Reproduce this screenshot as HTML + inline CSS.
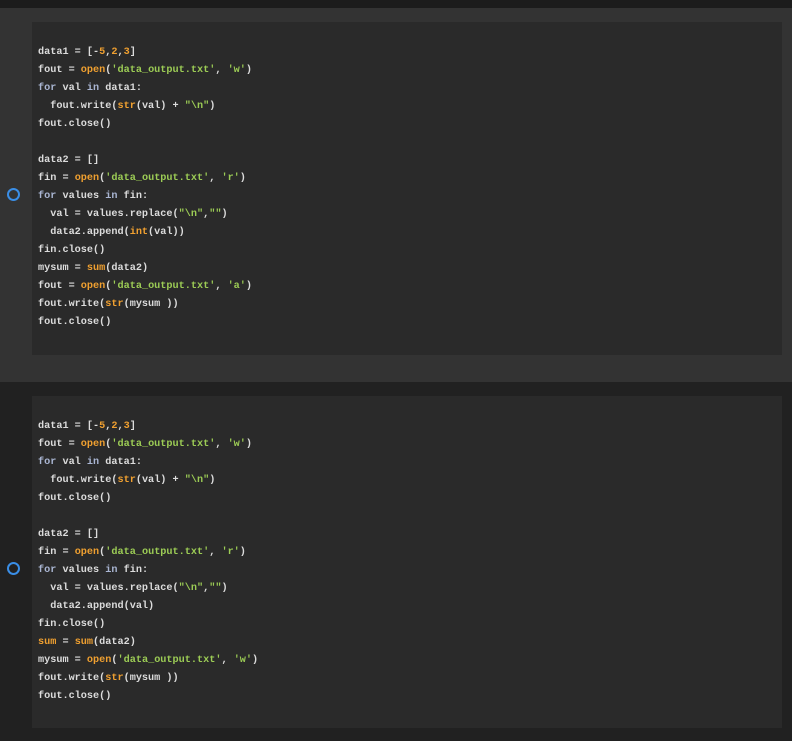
<!DOCTYPE html><html><head><style>
body{margin:0;width:792px;height:741px;background:#212121;position:relative;overflow:hidden;font-family:"Liberation Mono",monospace;}
.top{position:absolute;left:0;top:0;width:792px;height:8px;background:#1c1c1c}
.c1{position:absolute;left:0;top:8px;width:792px;height:374px;background:#333}
.code{position:absolute;left:32px;width:750px;background:#2a2a2a}
pre{margin:0;position:absolute;left:6px;font:bold 10.2px/18px "Liberation Mono",monospace;color:#dcdcdc}
.k{color:#aab6d3}.f{color:#f0a030}.s{color:#9ccc55}.n{color:#f0a030}
.circ{position:absolute;left:7px;width:9px;height:9px;border:2px solid #3a8ee6;border-radius:50%}
</style></head><body>
<div class="top"></div>
<div class="c1"></div>
<div class="code" style="top:22px;height:333px"><pre style="top:22px">data1 = [-<span class="n">5</span>,<span class="n">2</span>,<span class="n">3</span>]
fout = <span class="f">open</span>(<span class="s">'data_output.txt'</span>, <span class="s">'w'</span>)
<span class="k">for</span> val <span class="k">in</span> data1:
  fout.write(<span class="f">str</span>(val) + <span class="s">"\n"</span>)
fout.close()

data2 = []
fin = <span class="f">open</span>(<span class="s">'data_output.txt'</span>, <span class="s">'r'</span>)
<span class="k">for</span> values <span class="k">in</span> fin:
  val = values.replace(<span class="s">"\n"</span>,<span class="s">""</span>)
  data2.append(<span class="f">int</span>(val))
fin.close()
mysum = <span class="f">sum</span>(data2)
fout = <span class="f">open</span>(<span class="s">'data_output.txt'</span>, <span class="s">'a'</span>)
fout.write(<span class="f">str</span>(mysum ))
fout.close()</pre></div>
<div class="circ" style="top:188px"></div>
<div class="code" style="top:396px;height:332px"><pre style="top:22px">data1 = [-<span class="n">5</span>,<span class="n">2</span>,<span class="n">3</span>]
fout = <span class="f">open</span>(<span class="s">'data_output.txt'</span>, <span class="s">'w'</span>)
<span class="k">for</span> val <span class="k">in</span> data1:
  fout.write(<span class="f">str</span>(val) + <span class="s">"\n"</span>)
fout.close()

data2 = []
fin = <span class="f">open</span>(<span class="s">'data_output.txt'</span>, <span class="s">'r'</span>)
<span class="k">for</span> values <span class="k">in</span> fin:
  val = values.replace(<span class="s">"\n"</span>,<span class="s">""</span>)
  data2.append(val)
fin.close()
<span class="f">sum</span> = <span class="f">sum</span>(data2)
mysum = <span class="f">open</span>(<span class="s">'data_output.txt'</span>, <span class="s">'w'</span>)
fout.write(<span class="f">str</span>(mysum ))
fout.close()</pre></div>
<div class="circ" style="top:562px"></div>
</body></html>
